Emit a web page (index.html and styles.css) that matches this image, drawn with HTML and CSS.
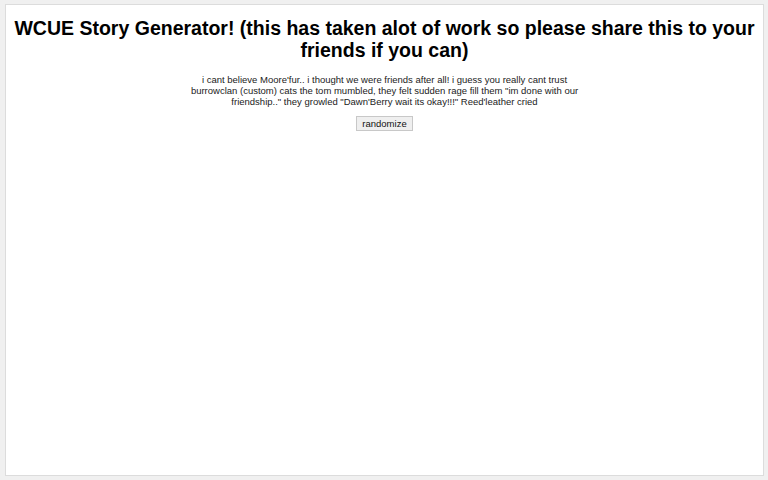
FILE: index.html
```html
<!DOCTYPE html>
<html lang="en">

<head>
  <meta charset="UTF-8">
  <meta name="viewport" content="width=device-width, initial-scale=1.0">
  <title>WCUE Story Generator</title>

  <link rel="stylesheet" href="styles.css">
</head>

<body>

  <main class="card">
    <h1>WCUE Story Generator! (this has taken alot of work so please share this to your friends if you can)</h1>

    <p id="story">i cant believe Moore'fur.. i thought we were friends after all! i guess you really cant trust burrowclan (custom) cats the tom mumbled, they felt sudden rage fill them "im done with our friendship.." they growled "Dawn'Berry wait its okay!!!" Reed'leather cried</p>

    <button class="randomize">randomize</button>
  </main>

</body>

</html>
```

FILE: styles.css
```css
html,
body {
  height: 100%;
}

body {
  margin: 0;
  padding: 4px 4px 4px 5px;
  box-sizing: border-box;
  background-color: #f0f0f0;
  font-family: "Liberation Sans", Arial, sans-serif;
  color: #111;
}

.card {
  height: 100%;
  box-sizing: border-box;
  background: #ffffff;
  border: 1px solid #dcdcdc;
  text-align: center;
  padding: 12px 6px;
}

h1 {
  font-size: 19.5px;
  line-height: 22px;
  margin: 0 0 13px;
  color: #000;
}

#story {
  max-width: 398px;
  margin: 0 auto 6px;
  font-size: 9.5px;
  line-height: 11px;
  color: #222;
}

.randomize {
  font-family: "Liberation Sans", Arial, sans-serif;
  font-size: 9.5px;
  padding: 1px 5px;
  background: #efefef;
  border: 1px solid #c8c8c8;
  border-radius: 0;
  color: #111;
  cursor: pointer;
}

.randomize:hover {
  background: #e4e4e4;
}
```
